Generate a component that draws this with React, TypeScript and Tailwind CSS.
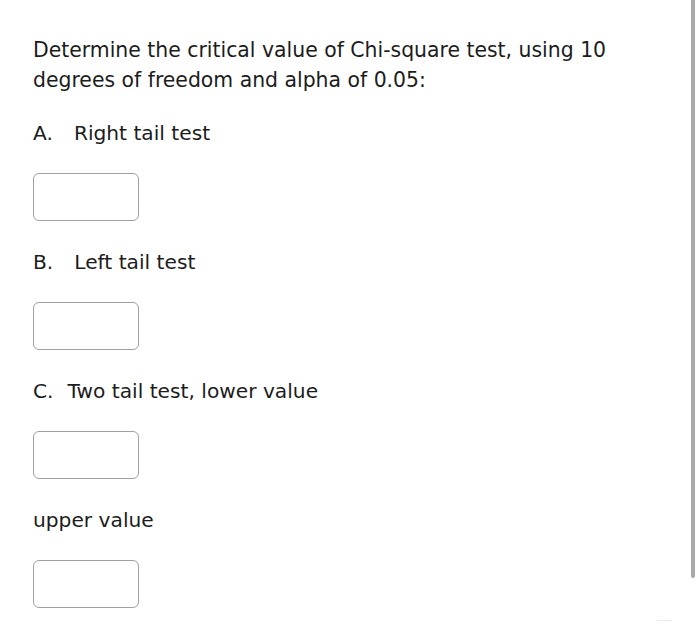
import React from "react";

const items = [
  { letter: "A.", text: "Right tail test", gap: "ml-[21px]" },
  { letter: "B.", text: "Left tail test", gap: "ml-[21px]" },
  { letter: "C.", text: "Two tail test, lower value", gap: "ml-[14px]" },
  { letter: "", text: "upper value", gap: "" },
];

function AnswerBox() {
  return (
    <input
      type="text"
      className="w-[106px] h-[48px] rounded-[6px] border-[1.5px] border-[#a0a0a0] bg-white outline-none"
    />
  );
}

export default function App() {
  return (
    <div className="relative w-[700px] h-[632px] bg-white overflow-hidden font-['DejaVu_Sans',sans-serif] text-[#1c1c1c]">
      <div className="pl-[33px] pt-[35px]">
        <p className="text-[20.4px] leading-[30px] w-[600px]">
          Determine the critical value of Chi-square test, using 10 degrees of freedom and alpha of 0.05:
        </p>

        <div className="mt-[23px] flex flex-col">
          {items.map((item) => (
            <div key={item.text} className="flex flex-col h-[129px]">
              <div className="flex items-center h-[30px] text-[20.2px] leading-[30px]">
                {item.letter && <span>{item.letter}</span>}
                <span className={item.gap}>{item.text}</span>
              </div>
              <div className="mt-[25px]">
                <AnswerBox />
              </div>
            </div>
          ))}
        </div>
      </div>

      {/* scrollbar */}
      <div className="absolute right-[5px] top-0 w-[4px] h-[578px] rounded-b-full bg-[#a9a9a9]" />
      <div className="absolute left-[657px] top-[620px] w-[15px] h-px bg-[#ececec]" />
    </div>
  );
}
